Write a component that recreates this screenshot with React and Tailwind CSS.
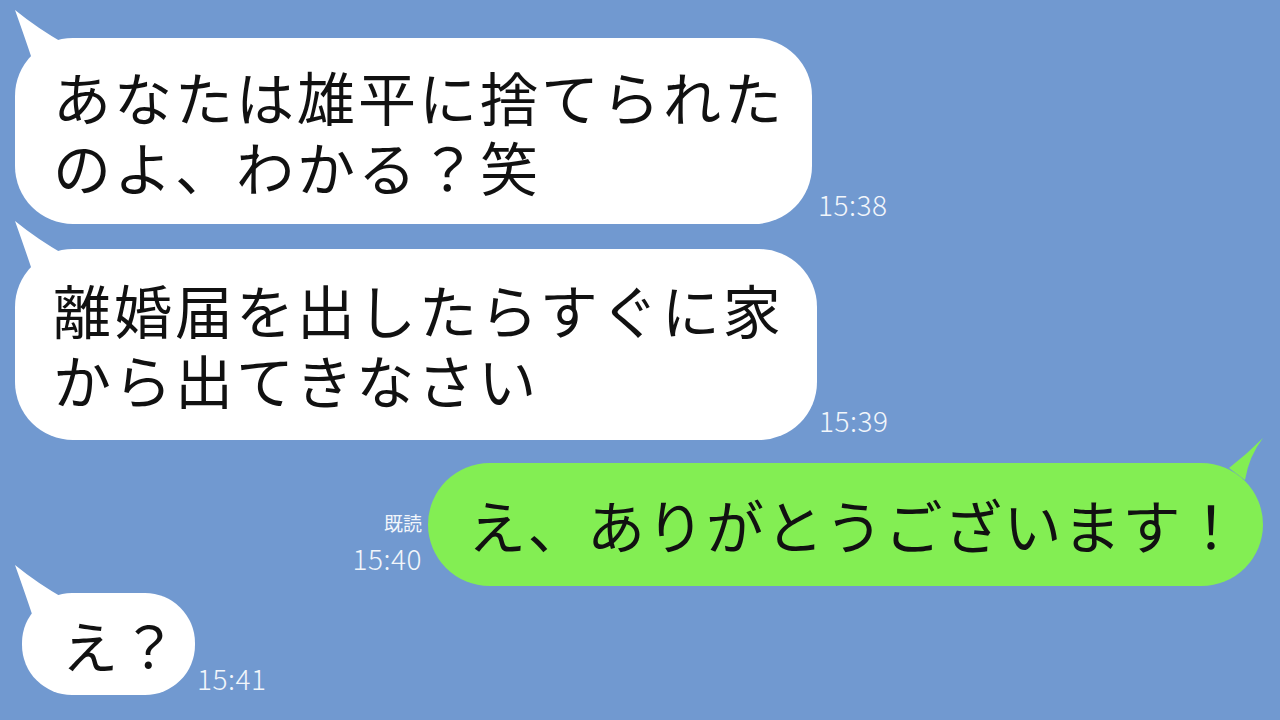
import React from "react";

const jp = { fontFamily: '"Noto Sans CJK JP", "Noto Sans", sans-serif' };

function LeftTail() {
  return (
    <svg className="absolute left-[0px] top-[-28px]" width="60" height="60" viewBox="0 0 60 60">
      <path d="M0 0 Q10 28 18 52 L50 34 Q22 18 0 0 Z" fill="#ffffff" />
    </svg>
  );
}

function RightTail() {
  return (
    <svg className="absolute right-[-2px] top-[-25px]" width="50" height="50" viewBox="0 0 50 50">
      <path d="M48 0 Q34 18 30 42 L14 30 Q32 16 48 0 Z" fill="#83ee53" />
    </svg>
  );
}

function Time({ children, className = "" }) {
  return (
    <span className={"text-[28px] leading-none text-[#f2f6fb] font-light tracking-[0.5px] " + className} style={jp}>
      {children}
    </span>
  );
}

export default function App() {
  return (
    <div className="w-[1280px] h-[720px] overflow-hidden bg-[#7199d0] pt-[38px]" style={jp}>
      <div className="flex items-end pl-[15px]">
        <div className="relative w-[797px] h-[186px] rounded-[58px] bg-white pl-[38px] pt-[23px] text-[58px] leading-[70px] tracking-[3px] text-[#111]">
          <LeftTail />
          <p className="relative h-[70px]">あなたは雄平に捨てられた</p>
          <p className="relative h-[70px]">のよ、わかる？笑</p>
        </div>
        <Time className="ml-[6px] mb-[6px]">15:38</Time>
      </div>

      <div className="flex items-end pl-[15px] mt-[25px]">
        <div className="relative w-[802px] h-[191px] rounded-[58px] bg-white pl-[38px] pt-[25px] text-[58px] leading-[70px] tracking-[3px] text-[#111]">
          <LeftTail />
          <p className="relative h-[70px]">離婚届を出したらすぐに家</p>
          <p className="relative h-[70px]">から出てきなさい</p>
        </div>
        <Time className="ml-[2px] mb-[6px]">15:39</Time>
      </div>

      <div className="flex items-center justify-end pr-[17px] mt-[23px]">
        <div className="flex flex-col items-end mr-[6px] mt-[36px]">
          <span className="text-[19px] leading-none text-[#f2f6fb] mb-[12px]">既読</span>
          <Time>15:40</Time>
        </div>
        <div className="relative w-[835px] h-[123px] rounded-[62px] bg-[#83ee53] pl-[40px] pt-[26px] text-[58px] leading-[70px] tracking-[1.5px] text-[#111]">
          <RightTail />
          <span className="relative">え、ありがとうございます！</span>
        </div>
      </div>

      <div className="flex items-end pl-[22px] mt-[7px]">
        <div className="relative w-[173px] h-[102px] rounded-[50px] bg-white pl-[40px] pt-[16px] text-[56px] leading-[70px] tracking-[3px] text-[#111]">
          <svg className="absolute left-[-7px] top-[-28px]" width="60" height="60" viewBox="0 0 60 60">
            <path d="M0 0 Q10 28 18 52 L50 34 Q22 18 0 0 Z" fill="#ffffff" />
          </svg>
          <span className="relative">え？</span>
        </div>
        <Time className="ml-[2px] mb-[3px]">15:41</Time>
      </div>
    </div>
  );
}
